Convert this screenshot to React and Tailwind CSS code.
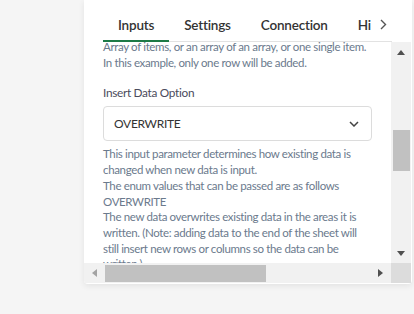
import { useState } from 'react';

const TABS = ['Inputs', 'Settings', 'Connection', 'Hi'];

const DESCRIPTION = [
  'This input parameter determines how existing data is changed when new data is input.',
  'The enum values that can be passed are as follows',
  'OVERWRITE',
  'The new data overwrites existing data in the areas it is written. (Note: adding data to the end of the sheet will still insert new rows or columns so the data can be written.)',
];

function Arrow({ dir, className }) {
  // small filled triangles like the classic scrollbar buttons
  const paths = {
    up: 'M0 5 L4 0 L8 5 Z',
    down: 'M0 0 L8 0 L4 5 Z',
    left: 'M5 0 L5 8 L0 4 Z',
    right: 'M0 0 L0 8 L5 4 Z',
  };
  const vertical = dir === 'up' || dir === 'down';
  return (
    <svg width={vertical ? 8 : 5} height={vertical ? 5 : 8} viewBox={vertical ? '0 0 8 5' : '0 0 5 8'} className={className}>
      <path d={paths[dir]} fill="currentColor" />
    </svg>
  );
}

export default function App() {
  const [activeTab, setActiveTab] = useState('Inputs');

  return (
    <div className="w-[414px] h-[314px] bg-[#f5f5f5] overflow-hidden font-['Lato',_'Liberation_Sans',_sans-serif]">
      <div className="ml-[84px] w-[328px] h-[284px] bg-white rounded-b-[4px] shadow-[0_2px_6px_rgba(0,0,0,0.08)] flex flex-col overflow-hidden">
        {/* tab header */}
        <div className="h-[42px] flex pl-[19px] pr-[20px]">
          <div className="flex-1 flex items-stretch border-b border-[#e2e2e2] relative">
            {TABS.map((tab) => (
              <button
                key={tab}
                type="button"
                onClick={() => setActiveTab(tab)}
                className={
                  'px-[15px] pt-[10px] text-[13.5px] tracking-[-0.2px] font-semibold text-[#333] whitespace-nowrap border-b-2 -mb-[1px] ' +
                  (activeTab === tab ? 'border-[#1d7a46]' : 'border-transparent')
                }
              >
                {tab}
              </button>
            ))}
            <div className="absolute right-0 top-0 h-[41px] w-[17px] bg-white flex items-center justify-center pt-[8px]">
              <svg width="7" height="11" viewBox="0 0 7 11">
                <path d="M1 1 L5.5 5.5 L1 10" fill="none" stroke="#555" strokeWidth="1.4" />
              </svg>
            </div>
          </div>
        </div>

        {/* scroll body */}
        <div className="flex h-[221px]">
          <div className="flex-1 overflow-hidden pl-[19px] pr-[19px]">
            <div className="-mt-[3px] text-[11.5px] tracking-[-0.35px] leading-[15.7px] text-[#6b7a8d]">
              <p>Array of items, or an array of an array, or one single item.</p>
              <p>In this example, only one row will be added.</p>

              <label className="block mt-[15px] text-[11.8px] tracking-[-0.3px] leading-[16px] text-[#4b4b5c]">Insert Data Option</label>
              <div className="mt-[5px] h-[35px] border border-[#dcdcdc] rounded-[4px] flex items-center justify-between pl-[10px] pr-[12px]">
                <span className="text-[12px] tracking-[-0.3px] text-[#333]">OVERWRITE</span>
                <svg width="10" height="6" viewBox="0 0 10 6">
                  <path d="M1 1 L5 5 L9 1" fill="none" stroke="#444" strokeWidth="1.5" />
                </svg>
              </div>

              <div className="mt-[5px]">
                {DESCRIPTION.map((line) => (
                  <p key={line}>{line}</p>
                ))}
              </div>
            </div>
          </div>

          {/* vertical scrollbar */}
          <div className="w-[20px] mr-[1px] bg-[#f1f1f1] flex flex-col items-center">
            <div className="h-[20px] flex items-center justify-center text-[#505050]">
              <Arrow dir="up" />
            </div>
            <div className="flex-1 w-full">
              <div className="mt-[68px] ml-[2px] w-[17px] h-[41px] bg-[#c1c1c1]" />
            </div>
            <div className="h-[20px] flex items-center justify-center text-[#505050]">
              <Arrow dir="down" />
            </div>
          </div>
        </div>

        {/* horizontal scrollbar */}
        <div className="flex h-[20px]">
          <div className="flex-1 bg-[#f1f1f1] flex items-center">
            <div className="w-[21px] flex justify-center text-[#a3a3a3]">
              <Arrow dir="left" />
            </div>
            <div className="flex-1 h-full">
              <div className="mt-[2px] w-[161px] h-[17px] bg-[#c1c1c1]" />
            </div>
            <div className="w-[21px] flex justify-center text-[#505050]">
              <Arrow dir="right" />
            </div>
          </div>
          <div className="w-[20px] mr-[1px] bg-[#dcdcdc]" />
        </div>
      </div>
    </div>
  );
}
